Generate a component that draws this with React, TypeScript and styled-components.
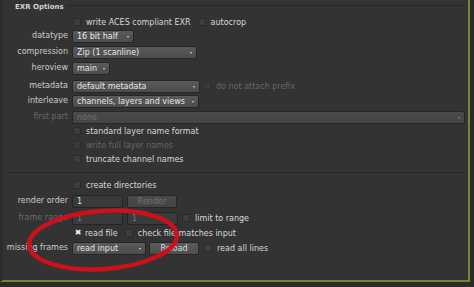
import React from "react";
import styled, { createGlobalStyle, css } from "styled-components";

const GlobalStyle = createGlobalStyle`
  html, body { margin: 0; padding: 0; background: #2a2a2a; }
  body {
    width: 474px; height: 287px; overflow: hidden;
    font-family: "DejaVu Sans", "Liberation Sans", sans-serif;
    -webkit-font-smoothing: antialiased;
  }
`;

const Screen = styled.div`
  position: relative;
  width: 474px;
  height: 287px;
  background: #2b2b2b;
  overflow: hidden;
`;

const Panel = styled.div`
  width: 470px;
  height: 282px;
  box-sizing: border-box;
  background: #333333;
  border-left: 3px solid #2c2c2c;
  border-right: 2px solid #80812e;
  border-bottom: 2px solid #80812e;
  display: flex;
  flex-direction: column;
  font-size: 8px;
  color: #d6d6d6;
`;

const Header = styled.div`
  height: 14px;
  display: flex;
  align-items: flex-start;
  padding-left: 12px;
  padding-right: 3px;
`;

const HeaderTitle = styled.span`
  font-weight: bold;
  font-size: 7px;
  line-height: 14px;
  color: #d4d4d4;
`;

const HeaderRule = styled.div`
  flex: 1;
  height: 1px;
  margin-top: 5px;
  margin-left: 3px;
  background: #262626;
`;

const Row = styled.div<{ $mt?: number }>`
  height: 14px;
  margin-top: ${(p) => p.$mt ?? 0}px;
  display: grid;
  grid-template-columns: 65px 1fr;
  column-gap: 4px;
  align-items: center;
`;

const Label = styled.span<{ $disabled?: boolean }>`
  text-align: right;
  white-space: nowrap;
  color: ${(p) => (p.$disabled ? "#6b6b6b" : "#cccccc")};
  line-height: 14px;
`;

const Controls = styled.div`
  display: flex;
  align-items: center;
  height: 14px;
  white-space: nowrap;
`;

const Dropdown = styled.div<{ $w?: number; $disabled?: boolean; $grow?: boolean }>`
  position: relative;
  box-sizing: border-box;
  height: 13px;
  width: ${(p) => (p.$grow ? "auto" : `${p.$w}px`)};
  ${(p) => p.$grow && css`flex: 1; margin-right: 3px;`}
  padding-left: 4px;
  border: 1px solid #262626;
  border-radius: 2px;
  background: ${(p) =>
    p.$disabled
      ? "linear-gradient(#4a4a4a, #444444)"
      : "linear-gradient(#5a5a5a, #4c4c4c)"};
  color: ${(p) => (p.$disabled ? "#707070" : "#e8e8e8")};
  line-height: 11px;
  display: flex;
  align-items: center;
  &::after {
    content: "";
    position: absolute;
    right: 4px;
    top: 5px;
    border-left: 1.5px solid transparent;
    border-right: 1.5px solid transparent;
    border-top: 2px solid ${(p) => (p.$disabled ? "#8a8a8a" : "#e0e0e0")};
  }
`;

const NumInput = styled.div<{ $disabled?: boolean }>`
  box-sizing: border-box;
  width: 51px;
  height: 13px;
  padding-left: 4px;
  border: 1px solid #242424;
  border-radius: 2px;
  background: #3a3a3a;
  color: ${(p) => (p.$disabled ? "#5d7a9e" : "#e0e0e0")};
  line-height: 11px;
  margin-right: 4px;
`;

const Button = styled.div<{ $disabled?: boolean }>`
  box-sizing: border-box;
  width: 50px;
  height: 13px;
  border: 1px solid #262626;
  border-radius: 2px;
  background: ${(p) =>
    p.$disabled ? "linear-gradient(#4b4b4b, #444444)" : "linear-gradient(#5c5c5c, #4e4e4e)"};
  color: ${(p) => (p.$disabled ? "#727272" : "#dddddd")};
  text-align: center;
  line-height: 11px;
`;

const Box = styled.span<{ $disabled?: boolean; $ml?: number }>`
  box-sizing: border-box;
  width: 8px;
  height: 8px;
  margin-left: ${(p) => p.$ml ?? 1}px;
  margin-right: 5px;
  border: 1px solid ${(p) => (p.$disabled ? "#2e2e2e" : "#2a2a2a")};
  background: ${(p) => (p.$disabled ? "#3a3a3a" : "#3d3d3d")};
  border-radius: 1px;
  flex: none;
`;

const Cross = styled.span`
  width: 8px;
  margin-left: 2px;
  margin-right: 3px;
  font-size: 8px;
  font-weight: bold;
  color: #f0f0f0;
  line-height: 8px;
  text-align: center;
`;

const CheckText = styled.span<{ $disabled?: boolean; $mr?: number }>`
  color: ${(p) => (p.$disabled ? "#666666" : "#d8d8d8")};
  margin-right: ${(p) => p.$mr ?? 0}px;
`;

const Spacer = styled.span<{ $w: number }>`
  width: ${(p) => p.$w}px;
  flex: none;
`;

const Separator = styled.div`
  height: 12px;
  display: flex;
  align-items: center;
  padding-left: 5px;
  padding-right: 5px;
  &::before {
    content: "";
    flex: 1;
    height: 1px;
    background: #262626;
  }
`;

const Annotation = styled.svg`
  position: absolute;
  left: 0;
  top: 0;
  pointer-events: none;
`;

type CheckProps = { text: string; disabled?: boolean; checked?: boolean; ml?: number; mr?: number };
const Check = ({ text, disabled, checked, ml, mr }: CheckProps) => (
  <>
    {checked ? <Cross>✖</Cross> : <Box $disabled={disabled} $ml={ml} />}
    <CheckText $disabled={disabled} $mr={mr}>{text}</CheckText>
  </>
);

export default function App() {
  return (
    <>
      <GlobalStyle />
      <Screen>
        <Panel>
          <Header>
            <HeaderTitle>EXR Options</HeaderTitle>
            <HeaderRule />
          </Header>
          <Row $mt={1}>
            <Label />
            <Controls>
              <Check text="write ACES compliant EXR" mr={7} />
              <Check text="autocrop" ml={0} />
            </Controls>
          </Row>
          <Row>
            <Label>datatype</Label>
            <Controls>
              <Dropdown $w={62}>16 bit half</Dropdown>
            </Controls>
          </Row>
          <Row $mt={2}>
            <Label>compression</Label>
            <Controls>
              <Dropdown $w={125}>Zip (1 scanline)</Dropdown>
            </Controls>
          </Row>
          <Row $mt={2}>
            <Label>heroview</Label>
            <Controls>
              <Dropdown $w={38}>main</Dropdown>
            </Controls>
          </Row>
          <Row $mt={4}>
            <Label>metadata</Label>
            <Controls>
              <Dropdown $w={128}>default metadata</Dropdown>
              <Check text="do not attach prefix" disabled ml={3} />
            </Controls>
          </Row>
          <Row $mt={1}>
            <Label>interleave</Label>
            <Controls>
              <Dropdown $w={127}>channels, layers and views</Dropdown>
            </Controls>
          </Row>
          <Row $mt={2}>
            <Label $disabled>first part</Label>
            <Controls>
              <Dropdown $grow $disabled>none</Dropdown>
            </Controls>
          </Row>
          <Row>
            <Label />
            <Controls>
              <Check text="standard layer name format" />
            </Controls>
          </Row>
          <Row>
            <Label />
            <Controls>
              <Check text="write full layer names" disabled />
            </Controls>
          </Row>
          <Row>
            <Label />
            <Controls>
              <Check text="truncate channel names" />
            </Controls>
          </Row>
          <Separator />
          <Row>
            <Label />
            <Controls>
              <Check text="create directories" />
            </Controls>
          </Row>
          <Row $mt={2}>
            <Label>render order</Label>
            <Controls>
              <NumInput>1</NumInput>
              <Button $disabled>Render</Button>
            </Controls>
          </Row>
          <Row $mt={3}>
            <Label $disabled>frame range</Label>
            <Controls>
              <NumInput $disabled>1</NumInput>
              <NumInput $disabled>1</NumInput>
              <Check text="limit to range" ml={0} />
            </Controls>
          </Row>
          <Row $mt={1}>
            <Label />
            <Controls>
              <Check text="read file" checked mr={7} />
              <Check text="check file matches input" ml={0} />
            </Controls>
          </Row>
          <Row $mt={1}>
            <Label>missing frames</Label>
            <Controls>
              <Dropdown $w={74}>read input</Dropdown>
              <Spacer $w={3} />
              <Button>Reload</Button>
              <Check text="read all lines" ml={5} />
            </Controls>
          </Row>
        </Panel>
        <Annotation width="474" height="287" viewBox="0 0 474 287">
          <ellipse
            cx="103"
            cy="240"
            rx="74"
            ry="29"
            transform="rotate(-4 103 240)"
            fill="none"
            stroke="#cc111c"
            strokeWidth="4.5"
          />
        </Annotation>
      </Screen>
    </>
  );
}
